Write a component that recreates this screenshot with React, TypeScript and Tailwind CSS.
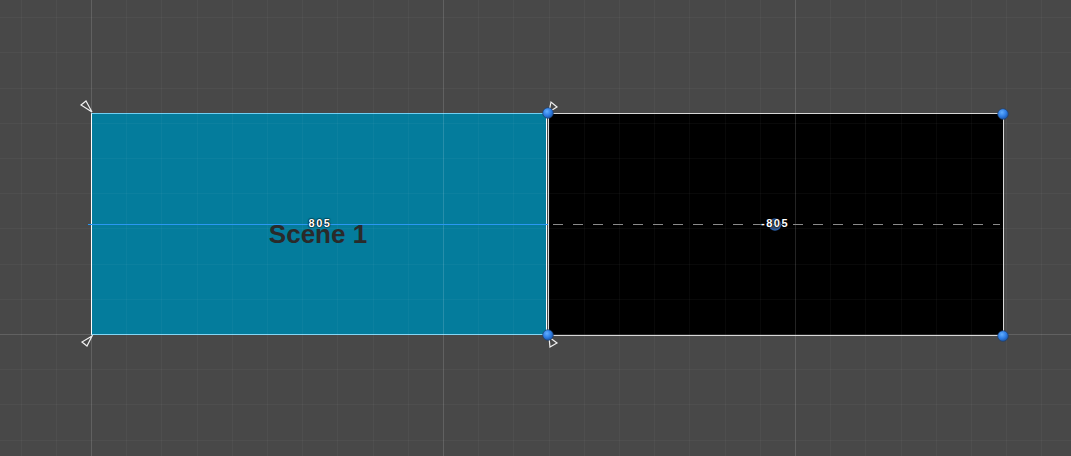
import React from "react";

const W = 1071;
const H = 456;
const STEP = 35.2;

// grid lines of the scene view
const xs = Array.from({ length: 32 }, (_, i) => 20.6 + i * STEP);
const ys = Array.from({ length: 14 }, (_, i) => 334 - 10 * STEP + i * STEP).filter(
  (y) => y > -1 && y < H + 1
);

function isMajorX(x: number) {
  const m = (x - 91) % 352;
  return Math.abs(m) < 1 || Math.abs(m - 352) < 1;
}

function Grid() {
  return (
    <svg className="absolute inset-0 pointer-events-none" width={W} height={H}>
      {xs.map((x, i) => (
        <line
          key={"x" + i}
          x1={Math.round(x) + 0.5}
          x2={Math.round(x) + 0.5}
          y1={0}
          y2={H}
          stroke={isMajorX(x) ? "rgba(255,255,255,0.14)" : "rgba(255,255,255,0.035)"}
        />
      ))}
      {ys.map((y, i) => (
        <line
          key={"y" + i}
          x1={0}
          x2={W}
          y1={Math.round(y) + 0.5}
          y2={Math.round(y) + 0.5}
          stroke={Math.abs(y - 334) < 1 ? "rgba(255,255,255,0.14)" : "rgba(255,255,255,0.035)"}
        />
      ))}
    </svg>
  );
}

function Handles() {
  const dots = [
    [548, 113],
    [548, 335],
    [1003, 114],
    [1003, 336],
  ];
  return (
    <svg className="absolute inset-0 pointer-events-none" width={W} height={H}>
      <defs>
        <radialGradient id="dot" cx="40%" cy="35%" r="70%">
          <stop offset="0%" stopColor="#62aeff" />
          <stop offset="55%" stopColor="#2e7de4" />
          <stop offset="100%" stopColor="#1b4f9a" />
        </radialGradient>
      </defs>
      {/* center line, solid on scene 1, dashed on the other */}
      <line x1={88} x2={548} y1={224.5} y2={224.5} stroke="#2a97f2" strokeWidth={1} />
      <line
        x1={553}
        x2={1000}
        y1={224.5}
        y2={224.5}
        stroke="#8a8a8a"
        strokeWidth={1}
        strokeDasharray="10 10"
      />
      {/* anchor triangles */}
      <polygon points="81,105 86,101 92,112" fill="none" stroke="#f0f0f0" strokeWidth={1.2} />
      <polygon points="92,336 82,342 87,346" fill="none" stroke="#f0f0f0" strokeWidth={1.2} />
      <polygon points="549,112 551,102 557,107" fill="none" stroke="#f0f0f0" strokeWidth={1.2} />
      <polygon points="549,337 550,347 557,343" fill="none" stroke="#f0f0f0" strokeWidth={1.2} />
      {dots.map(([x, y], i) => (
        <circle key={i} cx={x} cy={y} r={5.3} fill="url(#dot)" stroke="#1d3f70" strokeWidth={0.7} />
      ))}
      {/* pivot on second scene */}
      <circle cx={775} cy={224.5} r={5.5} fill="#6b9bd6" fillOpacity={0.5} stroke="#2b5fa8" strokeWidth={1.4} />
    </svg>
  );
}

export default function App() {
  return (
    <div
      className="relative overflow-hidden bg-[#484848] w-[1071px] h-[456px]"
      style={{ fontFamily: '"Liberation Sans", Arial, sans-serif' }}
    >
      {/* scene rects */}
      <div className="absolute left-[91px] top-[113px] w-[456px] h-[222px] bg-[#047c9c] border-l border-r border-l-white border-r-white border-t border-b border-t-[#6fd0f4] border-b-[#6fd0f4]" />
      <div className="absolute left-[548px] top-[113px] w-[456px] h-[223px] bg-black border border-[#d8d8d8]" />

      <Grid />
      <Handles />

      {/* labels */}
      <div className="absolute left-[268px] top-[219px] w-[100px] text-center text-[26px] leading-[30px] font-bold text-[#2a2a2a]">
        Scene 1
      </div>
      <div className="absolute left-[295px] top-[217px] w-[50px] text-center text-[11px] leading-[13px] font-bold tracking-[1.5px] text-white [text-shadow:0_0_2px_#000,0_0_1px_#000,0_0_1px_#000]">
        805
      </div>
      <div className="absolute left-[745px] top-[217px] w-[60px] text-center text-[11px] leading-[13px] font-bold tracking-[1.5px] text-white [text-shadow:0_0_2px_#000,0_0_1px_#000,0_0_1px_#000]">
        -805
      </div>
    </div>
  );
}
